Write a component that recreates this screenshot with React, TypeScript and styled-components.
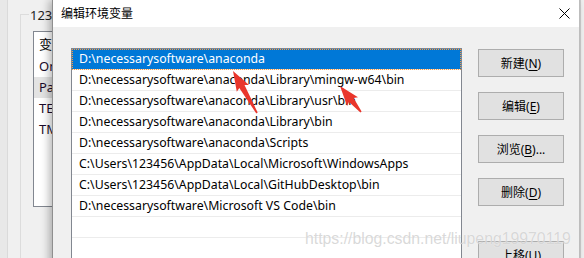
import React from 'react';
import styled, {createGlobalStyle} from 'styled-components';

const GlobalStyle = createGlobalStyle`
  html, body {
    margin: 0;
    padding: 0;
    background: #f0f0f0;
  }
  body {
    font-family: "Noto Sans", "Noto Sans CJK SC", sans-serif;
    font-size: 12px;
  }
`;

const UI_FONT = `"Noto Sans", "Noto Sans CJK SC", sans-serif`;

const Desktop = styled.div`
  position: relative;
  width: 584px;
  height: 258px;
  overflow: hidden;
  background: #e8e8e8;
  font-family: ${UI_FONT};
  font-size: 12px;
  color: #000;
`;

// window behind the dialog
const BackWindow = styled.div`
  position: absolute;
  left: 7px;
  top: 0;
  width: 200px;
  height: 258px;
  background: #f0f0f0;
  border-left: 1px solid #dadada;
  padding: 5px 0 0 12px;
  box-sizing: border-box;
`;

const GroupBox = styled.fieldset`
  margin: 0;
  padding: 7px 0 0 12px;
  height: 300px;
  border: 1px solid #dcdcdc;
  border-right: none;
  border-bottom: none;
  >legend {
    padding: 0 1px;
    margin-left: -4px;
    font-size: 13px;
    color: #1e1e1e;
    white-space: nowrap;
  }
`;

const VarList = styled.div`
  width: 160px;
  height: 174px;
  background: #fff;
  border: 1px solid #828790;
  display: flex;
  flex-direction: column;
`;

const VarHeader = styled.div`
  height: 24px;
  line-height: 24px;
  padding-left: 5px;
  font-size: 13px;
`;

const VarRow = styled.div<{$active?: boolean}>`
  height: 21px;
  line-height: 21px;
  padding-left: 5px;
  font-size: 13px;
  color: #1b0a2a;
  background: ${p => (p.$active ? '#e3e3e3' : 'transparent')};
`;

const Dialog = styled.div`
  position: absolute;
  left: 52px;
  top: 0;
  width: 526px;
  height: 300px;
  background: #f0f0f0;
  border-left: 1px solid #8f8f8f;
  border-right: 1px solid #bdbdbd;
  box-shadow: -3px 0 8px rgba(0, 0, 0, 0.28);
  display: flex;
  flex-direction: column;
`;

const TitleBar = styled.div`
  flex-shrink: 0;
  height: 27px;
  background: #fff;
  display: flex;
  align-items: center;
  justify-content: space-between;
  padding: 0 9px 0 8px;
  >.title {
    font-size: 12px;
    margin-top: -2px;
  }
`;

const DialogBody = styled.div`
  flex: 1;
  min-height: 0;
  display: flex;
  align-items: flex-start;
  padding: 21px 13px 0 18px;
`;

const PathList = styled.div`
  flex-shrink: 0;
  width: 389px;
  height: 240px;
  background: #fff;
  border: 1px solid #828790;
  display: flex;
  flex-direction: column;
`;

const PathRow = styled.div<{$selected?: boolean}>`
  flex-shrink: 0;
  height: 20px;
  line-height: 19px;
  padding-left: 7px;
  border-bottom: 1px solid #ececec;
  white-space: nowrap;
  font-size: 12.3px;
  color: ${p => (p.$selected ? '#fff' : '#000')};
  background: ${p => (p.$selected ? '#0078d7' : '#fff')};
  outline: ${p => (p.$selected ? '1px dotted #ff9a3c' : 'none')};
  outline-offset: -1px;
`;

const ButtonColumn = styled.div`
  display: flex;
  flex-direction: column;
  margin-left: 16px;
  padding-top: 1px;
  gap: 15px;
`;

const DlgButton = styled.div<{$gapBefore?: number}>`
  flex-shrink: 0;
  width: 84px;
  height: 26px;
  border: 1px solid #adadad;
  background: #e1e1e1;
  display: flex;
  align-items: center;
  justify-content: center;
  font-size: 12px;
  margin-top: ${p => p.$gapBefore || 0}px;
  >u {
    text-decoration-thickness: 1px;
    text-underline-offset: 2px;
  }
`;

const SideEdge = styled.div`
  position: absolute;
  left: 580px;
  top: 0;
  width: 4px;
  height: 258px;
  background: #f0f0f0;
  border-left: 1px solid #cfcfcf;
`;

const Watermark = styled.div`
  position: absolute;
  left: 305px;
  top: 230px;
  font-family: "Liberation Sans", Arial, sans-serif;
  font-size: 15.8px;
  color: rgba(185, 185, 185, 0.55);
  text-shadow: 0 0 1px rgba(255, 255, 255, 0.9);
  white-space: nowrap;
  pointer-events: none;
`;

const ArrowLayer = styled.svg`
  position: absolute;
  left: 0;
  top: 0;
  pointer-events: none;
`;

const paths = [
  'D:\\necessarysoftware\\anaconda',
  'D:\\necessarysoftware\\anaconda\\Library\\mingw-w64\\bin',
  'D:\\necessarysoftware\\anaconda\\Library\\usr\\bin',
  'D:\\necessarysoftware\\anaconda\\Library\\bin',
  'D:\\necessarysoftware\\anaconda\\Scripts',
  'C:\\Users\\123456\\AppData\\Local\\Microsoft\\WindowsApps',
  'C:\\Users\\123456\\AppData\\Local\\GitHubDesktop\\bin',
  'D:\\necessarysoftware\\Microsoft VS Code\\bin',
  '',
  '',
  '',
];

const buttons = [
  {label: '新建', key: 'N', tail: ''},
  {label: '编辑', key: 'E', tail: ''},
  {label: '浏览', key: 'B', tail: '...'},
  {label: '删除', key: 'D', tail: ''},
  {label: '上移', key: 'U', tail: '', gap: 20},
];

type Pt = [number, number];

// tapered annotation arrow, tail thin, head wide
function arrowPoints(tail: Pt, tip: Pt) {
  const dx = tip[0] - tail[0];
  const dy = tip[1] - tail[1];
  const len = Math.hypot(dx, dy);
  const ux = dx / len, uy = dy / len;
  const nx = -uy, ny = ux;
  const headLen = 18, headW = 14, neckW = 6, tailW = 1.5;
  const neck: Pt = [tip[0] - ux * headLen, tip[1] - uy * headLen];
  const barb: Pt = [tip[0] - ux * (headLen + 2), tip[1] - uy * (headLen + 2)];
  const pts: Pt[] = [
    [tail[0] + nx * tailW / 2, tail[1] + ny * tailW / 2],
    [neck[0] + nx * neckW / 2, neck[1] + ny * neckW / 2],
    [barb[0] + nx * headW / 2, barb[1] + ny * headW / 2],
    tip,
    [barb[0] - nx * headW / 2, barb[1] - ny * headW / 2],
    [neck[0] - nx * neckW / 2, neck[1] - ny * neckW / 2],
    [tail[0] - nx * tailW / 2, tail[1] - ny * tailW / 2],
  ];
  return pts.map(p => p[0].toFixed(1) + ',' + p[1].toFixed(1)).join(' ');
}

function CloseIcon() {
  return (
    <svg width="11" height="11" viewBox="0 0 11 11">
      <path d="M0.5 0.5 L10.5 10.5 M10.5 0.5 L0.5 10.5" stroke="#000" strokeWidth="1" fill="none" />
    </svg>
  );
}

export default function App() {
  return (
    <>
      <GlobalStyle />
      <Desktop>
        <BackWindow>
          <GroupBox>
            <legend>123456 的用户变量(U)</legend>
            <VarList>
              <VarHeader>变量</VarHeader>
              <VarRow>OneDrive</VarRow>
              <VarRow $active>Path</VarRow>
              <VarRow>TEMP</VarRow>
              <VarRow>TMP</VarRow>
            </VarList>
          </GroupBox>
        </BackWindow>
        <SideEdge />
        <Dialog>
          <TitleBar>
            <span className="title">编辑环境变量</span>
            <CloseIcon />
          </TitleBar>
          <DialogBody>
            <PathList>
              {paths.map((p, i) => (
                <PathRow key={i} $selected={i === 0}>{p}</PathRow>
              ))}
            </PathList>
            <ButtonColumn>
              {buttons.map(b => (
                <DlgButton key={b.key} $gapBefore={b.gap}>
                  {b.label}(<u>{b.key}</u>){b.tail}
                </DlgButton>
              ))}
            </ButtonColumn>
          </DialogBody>
        </Dialog>
        <ArrowLayer width="584" height="258" viewBox="0 0 584 258">
          <polygon points={arrowPoints([257, 113], [233, 71])} fill="#e9362c" />
          <polygon points={arrowPoints([361, 112], [340, 86])} fill="#e9362c" />
        </ArrowLayer>
        <Watermark>https://blog.csdn.net/liupeng19970119</Watermark>
      </Desktop>
    </>
  );
}
